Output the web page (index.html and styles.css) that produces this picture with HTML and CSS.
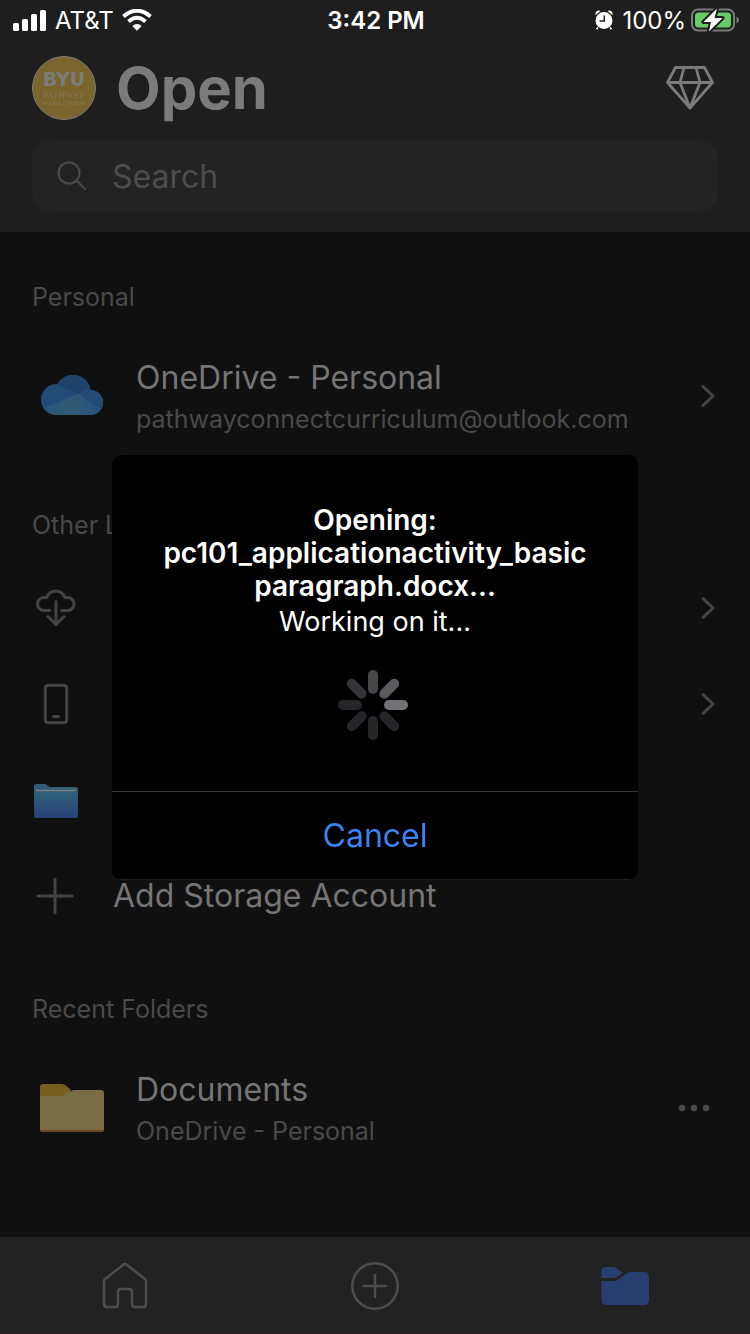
FILE: index.html
```
<!DOCTYPE html>
<html lang="en">
<head>
  <meta charset="UTF-8">
  <meta name="viewport" content="width=device-width, initial-scale=1">
  <title>Open</title>
  <link rel="stylesheet" href="styles.css">
</head>
<body>
  <header class="header">
    <!-- Status bar -->
    <div class="status-bar">
      <div class="status-left">
        <svg width="34" height="22" viewBox="0 0 34 22" fill="#fff">
          <rect x="0" y="14" width="6" height="8" rx="1.5"/>
          <rect x="9" y="10" width="6" height="12" rx="1.5"/>
          <rect x="18" y="5" width="6" height="17" rx="1.5"/>
          <rect x="27" y="1" width="6" height="21" rx="1.5"/>
        </svg>
        <span class="carrier">AT&amp;T</span>
        <svg width="30" height="22" viewBox="0 0 30 22" fill="none" stroke="#fff">
          <path d="M1.5 7.5 Q15 -4 28.5 7.5" stroke-width="4"/>
          <path d="M6.5 12.5 Q15 5 23.5 12.5" stroke-width="4"/>
          <path d="M10.3 17 Q15 13 19.7 17 L15 21.7 Z" fill="#fff" stroke="none"/>
        </svg>
      </div>
      <div class="clock">3:42 PM</div>
      <div class="status-right">
        <svg class="alarm" width="18" height="20" viewBox="0 0 18 20">
          <path d="M0.5 5 A3.5 3.5 0 0 1 5.5 1 Z M17.5 5 A3.5 3.5 0 0 0 12.5 1 Z" fill="#fff"/>
          <circle cx="9" cy="10.5" r="8.5" fill="#fff"/>
          <path d="M3 17.5 L1.5 19.3 M15 17.5 L16.5 19.3" stroke="#fff" stroke-width="1.5"/>
          <path d="M9.3 5.5 V11 H4.5" fill="none" stroke="#1e1e1e" stroke-width="1.5"/>
        </svg>
        <span>100%</span>
        <svg width="48" height="24" viewBox="0 0 48 24">
          <rect x="1" y="1.5" width="42" height="21" rx="6" fill="none" stroke="#7b7b7b" stroke-width="2"/>
          <rect x="4" y="4.500" width="36" height="15" rx="3.5" fill="#65ce63"/>
          <path d="M45.5 8.5 Q48 9.500 48 12 Q48 14.500 45.5 15.5 Z" fill="#7b7b7b"/>
          <path d="M26 0.5 L12.500 14 H20 L18 23.5 L31.5 10 H23.5 Z" fill="#fff" stroke="#1e1e1e" stroke-width="4" stroke-linejoin="round"/>
          <path d="M26 0.5 L12.500 14 H20 L18 23.5 L31.5 10 H23.5 Z" fill="#fff"/>
        </svg>
      </div>
    </div>

    <!-- Title row -->
    <div class="title-row">
      <svg class="avatar" width="64" height="64" viewBox="0 0 64 64" role="img" aria-label="BYU Pathway Worldwide">
        <circle cx="32" cy="32" r="31.5" fill="#7a652d" stroke="#7b7b7b"/>
        <text class="logo-name" x="32" y="30" text-anchor="middle">BYU</text>
        <path d="M10 34.500 H54" stroke="#806f43" stroke-width="0.5"/>
        <text class="logo-sub" x="32" y="42" text-anchor="middle">PATHWAY</text>
        <text class="logo-sub small" x="32" y="49" text-anchor="middle">WORLDWIDE</text>
      </svg>
      <h1>Open</h1>
      <button class="icon-btn" aria-label="Premium">
        <svg width="48" height="44" viewBox="0 0 48 44" fill="none" stroke="#7b7b7b" stroke-width="2.8" stroke-linejoin="round">
          <path d="M9.5 1.5 H38.5 L46.5 16.5 L24 42 L1.5 16.5 Z M1.5 16.5 H46.5"/>
          <path d="M18 1.5 L14 16.5 L24 42 L34 16.5 L30 1.5"/>
        </svg>
      </button>
    </div>

    <label class="search">
      <svg width="30" height="30" viewBox="0 0 30 30" fill="none" stroke="#4d4d4d" stroke-width="2" stroke-linecap="round">
        <circle cx="12" cy="12" r="10.5"/>
        <path d="M19.5 19.5 L28 28"/>
      </svg>
      <input type="text" placeholder="Search" aria-label="Search">
    </label>
  </header>

  <main>
    <section>
      <h2>Personal</h2>
      <a class="row tall" href="#">
        <svg width="64" height="42" viewBox="0 0 64 42">
          <defs>
            <clipPath id="cloud">
              <circle cx="16.5" cy="24.5" r="15.5"/>
              <circle cx="33" cy="18" r="18"/>
              <circle cx="50.5" cy="27.5" r="12.5"/>
              <rect x="16" y="24" width="35" height="16"/>
            </clipPath>
            <linearGradient id="cloud-low" x1="0" y1="0" x2="1" y2="0">
              <stop offset="0" stop-color="#28567c"/>
              <stop offset="0.5" stop-color="#305a75"/>
              <stop offset="1" stop-color="#25527d"/>
            </linearGradient>
          </defs>
          <g clip-path="url(#cloud)">
            <rect width="64" height="42" fill="#224b75"/>
            <path d="M15 8 L38 19 L64 36 V0 H15 Z" fill="#1e426c"/>
            <path d="M38 19 Q46 14 53 14 L64 16 V36 Z" fill="#244b76"/>
            <path d="M0 35 L38 19 L64 36 V42 H0 Z" fill="url(#cloud-low)"/>
          </g>
        </svg>
        <span class="row-text">
          <span class="row-title">OneDrive - Personal</span>
          <span class="row-sub">pathwayconnectcurriculum@outlook.com</span>
        </span>
        <svg class="chevron" width="14" height="22" viewBox="0 0 14 22"><path d="M2 1.5 L12 11 L2 20.5"/></svg>
      </a>
    </section>

    <section>
      <h2>Other Locations</h2>
      <a class="row" href="#">
        <svg class="icon" width="48" height="48" viewBox="0 0 48 48">
          <path d="M17.5 26.5 H12 A6.5 6.5 0 0 1 12 13.5 H14.7 A9.5 9.5 0 0 1 32.800 13.5 H35.500 A6.5 6.5 0 0 1 35.500 26.5 H29.5"/>
          <path d="M24 17.5 V40 M16 32.500 L24 40.500 L32 32.500"/>
        </svg>
        <span class="row-title">Offline Files</span>
        <svg class="chevron" width="14" height="22" viewBox="0 0 14 22"><path d="M2 1.5 L12 11 L2 20.5"/></svg>
      </a>
      <a class="row" href="#">
        <svg class="icon" width="48" height="48" viewBox="0 0 48 48">
          <rect x="13.3" y="5.3" width="21.4" height="37.4" rx="3"/>
          <path d="M21.5 36.5 H26.5"/>
        </svg>
        <span class="row-title">iPhone</span>
        <svg class="chevron" width="14" height="22" viewBox="0 0 14 22"><path d="M2 1.5 L12 11 L2 20.5"/></svg>
      </a>
      <a class="row" href="#">
        <svg width="48" height="48" viewBox="0 0 48 48">
          <defs>
            <linearGradient id="files" x1="0" y1="0" x2="0" y2="1">
              <stop offset="0" stop-color="#305c75"/>
              <stop offset="0.3" stop-color="#2f6079"/>
              <stop offset="1" stop-color="#274078"/>
            </linearGradient>
          </defs>
          <path d="M2 10.500 Q2 8 4.500 8 H13 Q14.500 8 16 9.500 L17.500 11 H43.500 Q46 11 46 13.500 V39.500 Q46 42 43.500 42 H4.500 Q2 42 2 39.500 Z" fill="url(#files)"/>
          <path d="M4 14.500 H44" stroke="#7b8082" stroke-width="1.5"/>
        </svg>
        <span class="row-title">Files App</span>
      </a>
      <a class="row" href="#">
        <svg class="icon plus" width="48" height="48" viewBox="0 0 48 48">
          <path d="M23 7 V41 M6 24 H40"/>
        </svg>
        <span class="row-title">Add Storage Account</span>
      </a>
    </section>

    <section>
      <h2>Recent Folders</h2>
      <div class="row tall">
        <svg width="64" height="48" viewBox="0 0 64 48">
          <path d="M0 3 Q0 0 3 0 H22 Q24 0 26 1.5 L31 6 L24 14 H0 Z" fill="#785d20"/>
          <path d="M0 14 H21 Q24 14 26 12 L30 8 Q32 6 34 6 H61 Q64 6 64 9 V45 Q64 48 61 48 H3 Q0 48 0 45 Z" fill="#7a6c44"/>
          <path d="M0 13 H21 Q24 13 26 11 L30 7" fill="none" stroke="#7c7352" stroke-width="1.5"/>
          <path d="M0.5 46 H63.5 Q63 48 61 48 H3 Q1 48 0.5 46 Z" fill="#6f4526"/>
        </svg>
        <span class="row-text">
          <span class="row-title">Documents</span>
          <span class="row-sub">OneDrive - Personal</span>
        </span>
        <button class="icon-btn more" aria-label="More">
          <svg width="32" height="8" viewBox="0 0 32 8" fill="#4a4a4a">
            <circle cx="4" cy="4" r="3.3"/><circle cx="16" cy="4" r="3.3"/><circle cx="28" cy="4" r="3.3"/>
          </svg>
        </button>
      </div>
    </section>
  </main>

  <nav class="tab-bar">
    <a href="#" aria-label="Home">
      <svg width="48" height="48" viewBox="0 0 48 48" fill="none" stroke="#4d4d4d" stroke-width="2.5" stroke-linejoin="round">
        <path d="M24 2 Q25 2 26 3 L44 17 Q45 18 45 19.500 V42 Q45 45 42 45 H34 Q31 45 31 42 V30 Q31 27 28 27 H20 Q17 27 17 30 V42 Q17 45 14 45 H6 Q3 45 3 42 V19.500 Q3 18 4 17 L22 3 Q23 2 24 2 Z"/>
      </svg>
    </a>
    <a href="#" aria-label="New">
      <svg width="48" height="48" viewBox="0 0 48 48" fill="none" stroke="#4d4d4d" stroke-width="2.5" stroke-linecap="round">
        <circle cx="24" cy="24" r="22.7"/>
        <path d="M24 13 V35 M13 24 H35"/>
      </svg>
    </a>
    <a href="#" aria-label="Open">
      <svg width="48" height="48" viewBox="0 0 48 48" fill="#283e70">
        <path d="M0.500 9 Q0.500 5 4.500 5 H12 Q14.500 5 16.500 7 L21.500 10.500 L17 14.500 Q15 16 12.500 16 H0.500 Z"/>
        <path d="M0.500 19 H13 Q16 19 18 17 L25 11.500 Q27 10 29.500 10 H43 Q48 10 48 15 V38 Q48 43 43 43 H5.500 Q0.500 43 0.500 38 Z"/>
      </svg>
    </a>
  </nav>

  <!-- Progress dialog -->
  <div class="overlay">
    <div class="dialog" role="dialog" aria-labelledby="dialog-title">
      <h3 id="dialog-title">Opening:<br>pc101_applicationactivity_basic<br>paragraph.docx...</h3>
      <p>Working on it...</p>
      <svg class="spinner" width="70" height="70" viewBox="-35 -35 70 70" stroke-width="10" stroke-linecap="round">
        <path d="M16 0 H30" stroke="#737375"/>
        <path d="M16 0 H30" stroke="#262628" transform="rotate(45)"/>
        <path d="M16 0 H30" stroke="#262628" transform="rotate(90)"/>
        <path d="M16 0 H30" stroke="#262628" transform="rotate(135)"/>
        <path d="M16 0 H30" stroke="#262628" transform="rotate(180)"/>
        <path d="M16 0 H30" stroke="#343436" transform="rotate(225)"/>
        <path d="M16 0 H30" stroke="#474749" transform="rotate(270)"/>
        <path d="M16 0 H30" stroke="#5c5c5e" transform="rotate(315)"/>
      </svg>
      <button class="cancel-btn">Cancel</button>
    </div>
  </div>
</body>
</html>
```

FILE: styles.css
```
* {
  box-sizing: border-box;
  margin: 0;
  padding: 0;
}
body {
  display: flex;
  flex-direction: column;
  min-height: 100vh;
  font-family: Inter, "Liberation Sans", sans-serif;
  background-color: #101010;
  color: #7b7b7b;
}
svg {
  display: block;
  flex: none;
}
a {
  color: inherit;
  text-decoration: none;
}
button {
  font-family: inherit;
  background: none;
  border: none;
  cursor: pointer;
}

/* Header */
.header {
  background-color: #1e1e1e;
  padding-bottom: 20px;
}
.status-bar {
  display: grid;
  grid-template-columns: 1fr auto 1fr;
  align-items: center;
  height: 40px;
  padding: 0 11px 0 13px;
  color: #fff;
  font-size: 24px;
}
.status-left,
.status-right {
  display: flex;
  align-items: center;
  gap: 8px;
}
.status-right {
  justify-content: flex-end;
  gap: 5px;
}
.alarm {
  margin-right: 4px;
}
.clock {
  font-weight: 600;
}
.title-row {
  display: flex;
  align-items: center;
  gap: 20px;
  height: 96px;
  padding: 0 36px 0 32px;
}
.title-row h1 {
  flex: 1;
  font-size: 58px;
  line-height: 64px;
  font-weight: 700;
}
.logo-name {
  font-family: "DejaVu Sans", sans-serif;
  font-size: 19px;
  font-weight: 700;
  fill: #7b7b7b;
}
.logo-sub {
  font-family: "Liberation Serif", serif;
  font-size: 9px;
  fill: #85785a;
}
.logo-sub.small {
  font-size: 7px;
}

/* Search box */
.search {
  display: flex;
  align-items: center;
  gap: 25px;
  height: 72px;
  margin: 4px 32px 0;
  padding: 0 25px;
  border-radius: 20px;
  background-color: #232323;
}
.search input {
  flex: 1;
  min-width: 0;
  border: none;
  outline: none;
  background: none;
  font-family: inherit;
  font-size: 32px;
  color: #7b7b7b;
}
.search input::placeholder {
  color: #4d4d4d;
  opacity: 1;
}

/* Location lists */
main {
  flex: 1;
}
section h2 {
  padding: 49px 32px 19px;
  font-size: 25px;
  line-height: 32px;
  font-weight: 400;
  color: #4a4a4a;
}
.row {
  display: flex;
  align-items: center;
  gap: 33px;
  height: 96px;
  padding: 0 35px 0 32px;
}
.row.tall {
  height: 128px;
  padding-left: 40px;
  gap: 32px;
}
.row-text {
  flex: 1;
}
.row-title,
.row-sub {
  display: block;
}
.row-title {
  flex: 1;
  font-size: 32px;
  line-height: 46px;
  color: #757575;
}
.row-sub {
  font-size: 25px;
  line-height: 36px;
  color: #4a4a4a;
}
.icon,
.chevron {
  fill: none;
  stroke: #444;
  stroke-width: 3;
  stroke-linecap: round;
  stroke-linejoin: round;
}
.more {
  margin-right: 5px;
}

/* Bottom tabs */
.tab-bar {
  display: flex;
  height: 97px;
  padding-top: 2px;
  background-color: #222;
  border-bottom: 1px solid #2a1a22;
}
.tab-bar a {
  flex: 1;
  display: flex;
  align-items: center;
  justify-content: center;
}

/* Progress dialog */
.overlay {
  position: fixed;
  inset: 0;
  display: flex;
  align-items: center;
  justify-content: center;
  padding: 0 112px;
}
.dialog {
  flex: 1;
  display: flex;
  flex-direction: column;
  align-items: center;
  padding-top: 49px;
  border-radius: 10px;
  background-color: #000;
  color: #fff;
  text-align: center;
  overflow: hidden;
}
.dialog h3 {
  font-size: 28px;
  line-height: 33px;
  font-weight: 600;
}
.dialog p {
  font-size: 27px;
  line-height: 38px;
}
.spinner {
  margin: 29px 4px 51px 0;
}
.cancel-btn {
  width: 100%;
  height: 89px;
  border-top: 1px solid #3a3a3a;
  border-bottom: 1px solid #222;
  font-size: 32px;
  color: #3b82f7;
}
```
